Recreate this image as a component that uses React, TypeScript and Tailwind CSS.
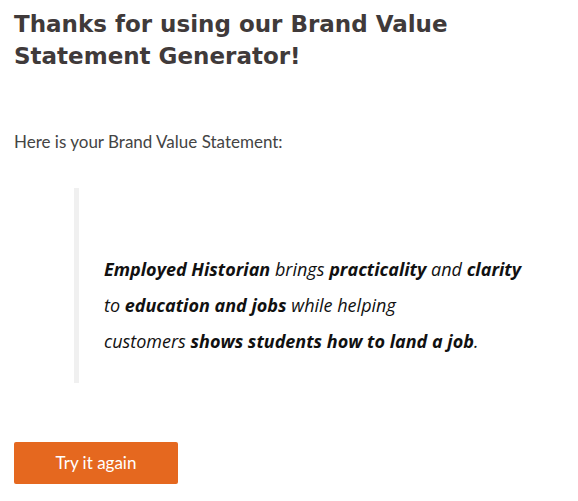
export default function App() {
  return (
    <div className="min-h-[501px] w-[578px] bg-white px-[14px] pt-[8px]">
      <h1
        className="text-[23px] font-bold leading-[32px] text-[#403a3a]"
        style={{ fontFamily: '"DejaVu Sans", sans-serif' }}
      >
        Thanks for using our Brand Value Statement Generator!
      </h1>

      <p
        className="mt-[58px] text-[17px] leading-[24px] text-[#444]"
        style={{ fontFamily: 'Lato, sans-serif' }}
      >
        Here is your Brand Value Statement:
      </p>

      <blockquote
        className="ml-[60px] mt-[34px] border-l-[5px] border-[#f0f0f0] pb-[24px] pl-[25px] pt-[63px] text-[18px] italic leading-[36px] text-[#111]"
        style={{ fontFamily: '"Open Sans", sans-serif' }}
      >
        <strong className="font-bold">Employed Historian</strong> brings{' '}
        <strong className="font-bold">practicality</strong> and{' '}
        <strong className="font-bold">clarity</strong>
        <br />
        to <strong className="font-bold">education and jobs</strong> while helping
        <br />
        customers <strong className="font-bold">shows students how to land a job</strong>.
      </blockquote>

      <button
        className="mt-[59px] h-[42px] w-[164px] rounded-[2px] bg-[#e5681f] text-[17px] text-white"
        style={{ fontFamily: 'Lato, sans-serif' }}
      >
        Try it again
      </button>
    </div>
  );
}
